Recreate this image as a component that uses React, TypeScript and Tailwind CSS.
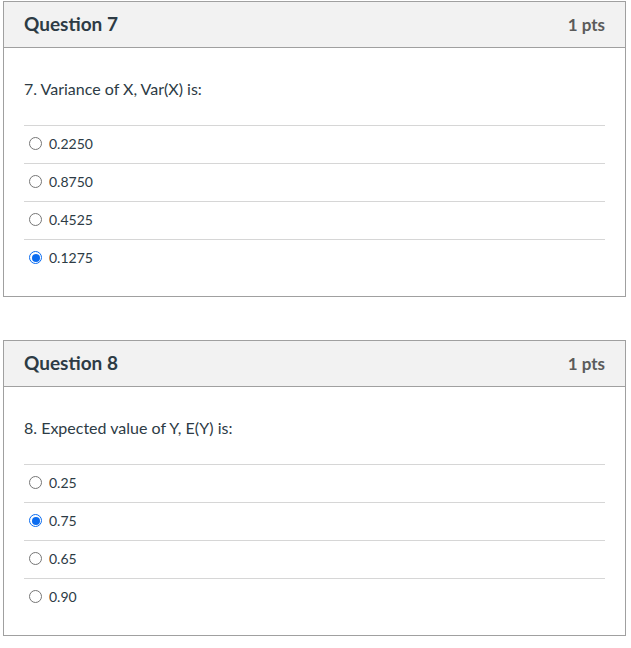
type Question = {
  number: number;
  text: string;
  points: number;
  answers: string[];
  selected: number;
};

const questions: Question[] = [
  {
    number: 7,
    text: "7. Variance of X, Var(X) is:",
    points: 1,
    answers: ["0.2250", "0.8750", "0.4525", "0.1275"],
    selected: 3,
  },
  {
    number: 8,
    text: "8. Expected value of Y, E(Y) is:",
    points: 1,
    answers: ["0.25", "0.75", "0.65", "0.90"],
    selected: 1,
  },
];

function Radio({ checked }: { checked: boolean }) {
  if (checked) {
    return (
      <span className="flex h-[13px] w-[13px] items-center justify-center rounded-full border-[1.5px] border-[#0b6cf0] bg-white">
        <span className="h-[8px] w-[8px] rounded-full bg-[#0b6cf0]" />
      </span>
    );
  }
  return (
    <span className="h-[13px] w-[13px] rounded-full border border-[#767676] bg-white" />
  );
}

function QuestionCard({ q }: { q: Question }) {
  return (
    <div className="w-[623px] border border-[#a0a0a0] bg-white">
      {/* Header */}
      <div className="flex h-[46px] items-center justify-between border-b border-[#a0a0a0] bg-[#f2f2f2] px-5">
        <h2 className="text-[19px] font-bold text-[#2d3b45]">
          Question {q.number}
        </h2>
        <span className="text-[17px] font-bold text-[#5b5b5b]">
          {q.points} pts
        </span>
      </div>

      {/* Body */}
      <div className="px-5 pb-[19px] pt-[31px]">
        <p className="text-[16px] leading-[20px] text-[#2d3b45]">{q.text}</p>
        <div className="mt-[26px]">
          {q.answers.map((a, i) => (
            <div
              key={a}
              className="flex h-[38px] items-center gap-[7px] border-t border-[#d6d6d6] pb-[2px] pl-[5px]"
            >
              <Radio checked={i === q.selected} />
              <span className="text-[14px] text-[#2d3b45]">{a}</span>
            </div>
          ))}
        </div>
      </div>
    </div>
  );
}

export default function App() {
  return (
    <div
      className="flex min-h-[648px] flex-col gap-[43px] bg-white pl-[3px] pt-[1px]"
      style={{ fontFamily: "Lato, 'Liberation Sans', sans-serif" }}
    >
      {questions.map((q) => (
        <QuestionCard key={q.number} q={q} />
      ))}
    </div>
  );
}
